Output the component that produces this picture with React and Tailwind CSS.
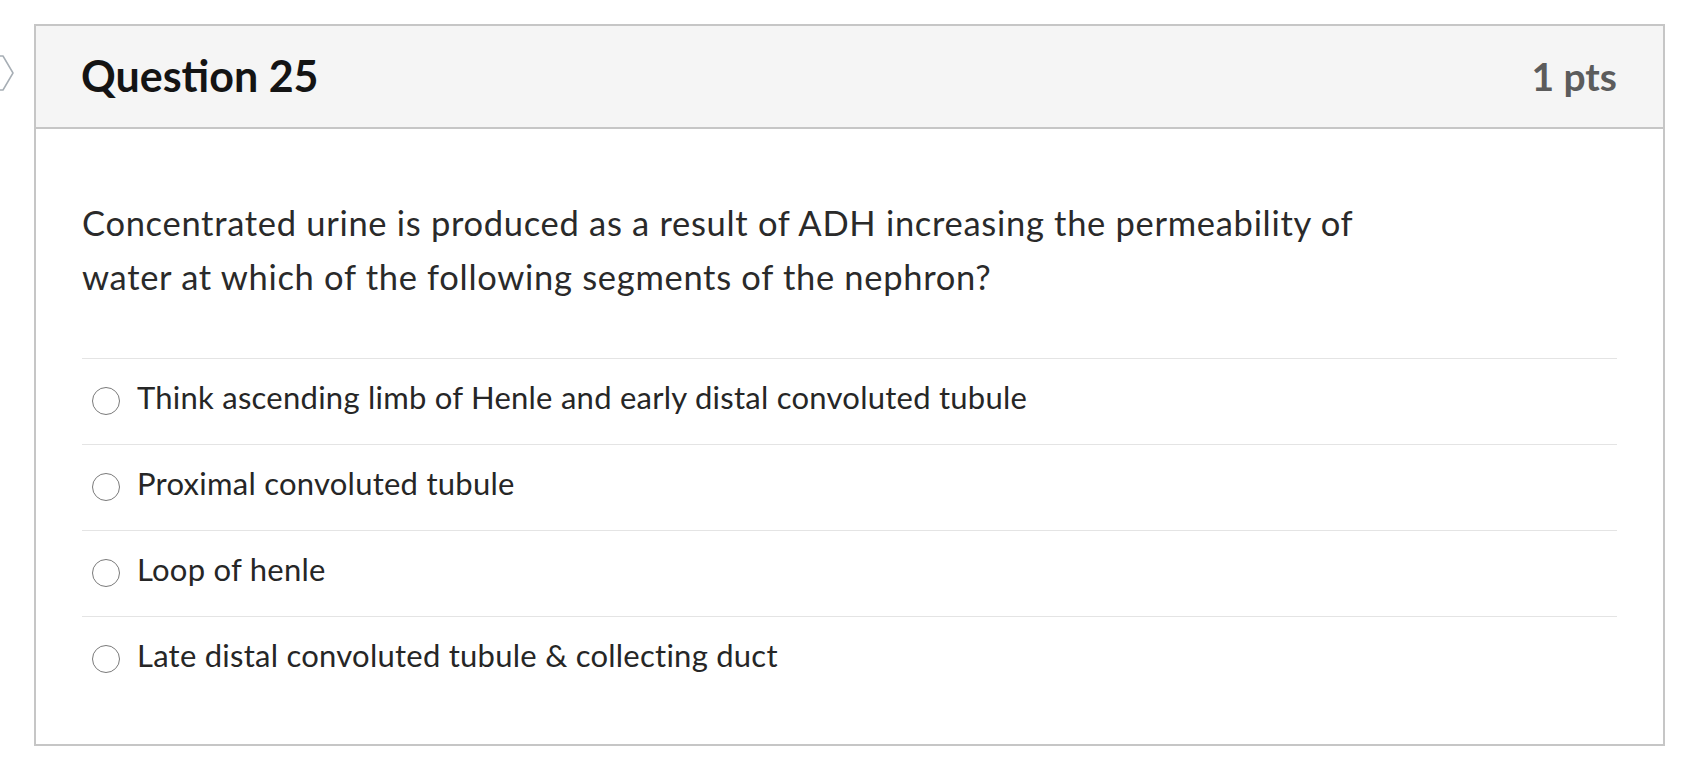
import React from "react";

const options = [
  "Think ascending limb of Henle and early distal convoluted tubule",
  "Proximal convoluted tubule",
  "Loop of henle",
  "Late distal convoluted tubule & collecting duct",
];

export default function App() {
  return (
    <div
      className="relative min-h-screen w-full bg-white"
      style={{ fontFamily: "Lato, 'Open Sans', sans-serif" }}
    >
      <svg
        className="absolute left-0 top-[54px]"
        width="16"
        height="38"
        viewBox="0 0 16 38"
        fill="none"
      >
        <path d="M0 2 L3 2 L13 19 L3 36 L0 36" stroke="#a7aeb5" strokeWidth="1.5" strokeLinejoin="round" />
      </svg>
      <div className="pl-[34px] pt-[24px]">
        <div className="flex h-[722px] w-[1631px] flex-col border-2 border-[#c6c6c6]">
          <div className="flex h-[103px] items-center justify-between border-b-2 border-[#c6c6c6] bg-[#f5f5f5] pl-[45px] pr-[46px]">
            <span className="text-[43px] font-bold text-[#141414]">Question 25</span>
            <span className="text-[39px] font-bold text-[#5c5c5c]">1 pts</span>
          </div>
          <div className="px-[46px] pt-[67px]">
            <p className="whitespace-nowrap text-[34.5px] leading-[54px] tracking-[0.7px] text-[#2a2a2a]">
              Concentrated urine is produced as a result of ADH increasing the permeability of
              <br />
              water at which of the following segments of the nephron?
            </p>
            <div className="mt-[54px]">
              {options.map((o) => (
                <div
                  key={o}
                  className="flex h-[86px] items-start border-t-[1.5px] border-[#e4e4e4] pl-[10px] pt-[20px]"
                >
                  <span className="mt-[8px] h-[28px] w-[28px] shrink-0 rounded-full border-[1.5px] border-[#7a7a7a] bg-white" />
                  <span className="ml-[17px] text-[31px] leading-[36px] tracking-[0.25px] text-[#262626]">{o}</span>
                </div>
              ))}
            </div>
          </div>
        </div>
      </div>
    </div>
  );
}
